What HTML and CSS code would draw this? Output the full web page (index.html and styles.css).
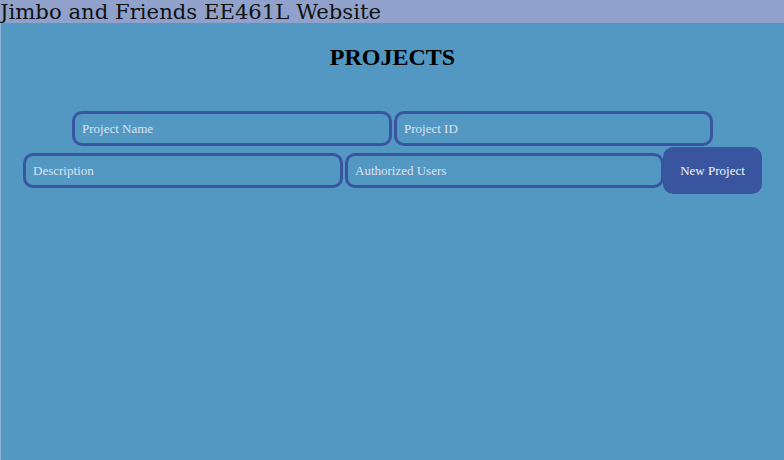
FILE: index.html
```html
<!DOCTYPE html>
<html>
<head>
<meta charset="utf-8">
<link rel="stylesheet" href="styles.css">
</head>
<body>
<header class="topbar">Jimbo and Friends EE461L Website</header>
<main class="page">
  <h2 class="title">PROJECTS</h2>
  <div class="form">
    <input class="field" type="text" placeholder="Project Name">
    <input class="field field-b" type="text" placeholder="Project ID">
    <input class="field" type="text" placeholder="Description">
    <input class="field field-b" type="text" placeholder="Authorized Users">
    <button class="btn">New Project</button>
  </div>
</main>
</body>
</html>
```
FILE: styles.css
```css
html, body {
  margin: 0;
  padding: 0;
  height: 100%;
}
body {
  background: #5397c3;
  font-family: "Liberation Serif", serif;
  overflow: hidden;
}
.topbar {
  height: 23px;
  background: #90a2cc;
  font-family: "DejaVu Serif", serif;
  font-size: 21.2px;
  line-height: 23px;
  color: #111;
  white-space: nowrap;
  overflow: visible;
}
.page {
  height: 437px;
  border-left: 1px solid #8eaed3;
  box-sizing: border-box;
  padding-top: 20px;
}
.title {
  margin: 0;
  text-align: center;
  font-size: 24px;
  font-weight: bold;
  color: #000;
  line-height: 28px;
}
.form {
  margin-top: 40px;
  display: flex;
  flex-wrap: wrap;
  justify-content: center;
  align-items: center;
  column-gap: 2px;
  row-gap: 1px;
}
.field {
  box-sizing: border-box;
  width: 320px;
  height: 35px;
  border: 3px solid #3a55a0;
  border-radius: 10px;
  background: #5397c3;
  color: #e6ecf4;
  font-family: "Liberation Serif", serif;
  font-size: 13px;
  padding: 0 7px;
  outline: none;
}
.field-b {
  width: 319px;
}
.field::placeholder {
  color: #dce4ef;
}
.btn {
  box-sizing: border-box;
  width: 99px;
  height: 47px;
  border: none;
  border-radius: 10px;
  background: #3a55a0;
  color: #f2f4fa;
  font-family: "Liberation Serif", serif;
  font-size: 13px;
  margin-left: -3px;
}
```
